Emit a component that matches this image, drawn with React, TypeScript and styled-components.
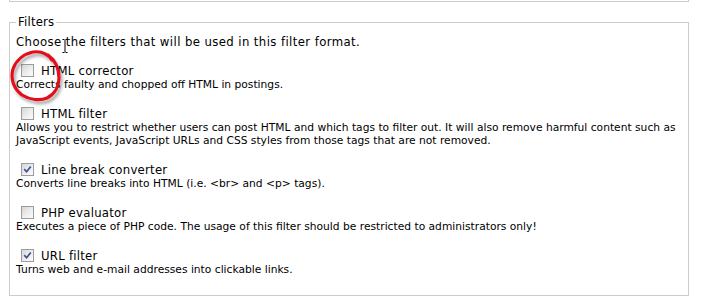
import React from 'react';
import styled, { createGlobalStyle } from 'styled-components';

const GlobalStyle = createGlobalStyle`
    html, body {
        margin: 0;
        padding: 0;
        background: #ffffff;
    }
`;

const Page = styled.div`
    position: relative;
    width: 702px;
    height: 304px;
    overflow: hidden;
    background: #ffffff;
`;

const PrevFieldset = styled.div`
    box-sizing: border-box;
    margin-left: 9px;
    width: 680px;
    height: 2px;
    border: 1px solid #cccccc;
    border-top: none;
`;

const Fieldset = styled.fieldset`
    box-sizing: border-box;
    margin: 12px 0 0 9px;
    width: 680px;
    min-width: 0;
    padding: 0 6px 19px 6px;
    border: 1px solid #cccccc;
`;

const Legend = styled.legend`
    padding: 0 2px;
    font-family: "DejaVu Sans Condensed", "DejaVu Sans", sans-serif;
    font-size: 13px;
    line-height: 16px;
    letter-spacing: 0.2px;
    color: #000000;
`;

const Intro = styled.p`
    margin: 4px 0 0 0;
    font-family: "DejaVu Sans Condensed", "DejaVu Sans", sans-serif;
    font-size: 13px;
    line-height: 16px;
    letter-spacing: 0.4px;
    color: #000000;
`;

const FilterList = styled.div`
    display: flex;
    flex-direction: column;
    gap: 15px;
    margin-top: 13px;
`;

const FilterItem = styled.div`
    display: flex;
    flex-direction: column;
`;

const FilterLabel = styled.label`
    display: flex;
    align-items: center;
    gap: 7px;
    padding-left: 5px;
    font-family: "DejaVu Sans Condensed", "DejaVu Sans", sans-serif;
    font-size: 13px;
    line-height: 15px;
    letter-spacing: 0.25px;
    color: #000000;
`;

const Box = styled.span<{ $checked?: boolean }>`
    box-sizing: border-box;
    display: inline-flex;
    align-items: center;
    justify-content: center;
    width: 13px;
    height: 13px;
    border: 1px solid #9c9c9c;
    background: linear-gradient(135deg, #d6d6d6 0%, #eeeeee 55%, #fbfbfb 100%);
    flex: none;
`;

const Description = styled.div`
    font-family: "DejaVu Sans", Verdana, sans-serif;
    font-size: 10.7px;
    line-height: 13px;
    color: #000000;
`;

const Overlay = styled.svg`
    position: absolute;
    left: 0;
    top: 0;
    pointer-events: none;
`;

const CheckMark = () => (
    <svg width="9" height="9" viewBox="0 0 9 9">
        <path d="M1.2 4.2 L3.6 6.8 L7.8 1.4" fill="none" stroke="#3f4f96" strokeWidth="1.7" />
    </svg>
);

type Filter = {
    name: string
    description: string
    checked: boolean
};

const filters: Filter[] = [
    {
        name: 'HTML corrector',
        description: 'Corrects faulty and chopped off HTML in postings.',
        checked: false,
    },
    {
        name: 'HTML filter',
        description: 'Allows you to restrict whether users can post HTML and which tags to filter out. It will also remove harmful content such as JavaScript events, JavaScript URLs and CSS styles from those tags that are not removed.',
        checked: false,
    },
    {
        name: 'Line break converter',
        description: 'Converts line breaks into HTML (i.e. <br> and <p> tags).',
        checked: true,
    },
    {
        name: 'PHP evaluator',
        description: 'Executes a piece of PHP code. The usage of this filter should be restricted to administrators only!',
        checked: false,
    },
    {
        name: 'URL filter',
        description: 'Turns web and e-mail addresses into clickable links.',
        checked: true,
    },
];

export default function App() {
    return (
        <Page>
            <GlobalStyle />
            <PrevFieldset />
            <Fieldset>
                <Legend>Filters</Legend>
                <Intro>Choose the filters that will be used in this filter format.</Intro>
                <FilterList>
                    {filters.map((f) => (
                        <FilterItem key={f.name}>
                            <FilterLabel>
                                <Box $checked={f.checked}>{f.checked ? <CheckMark /> : null}</Box>
                                {f.name}
                            </FilterLabel>
                            <Description>{f.description}</Description>
                        </FilterItem>
                    ))}
                </FilterList>
            </Fieldset>

            {/* hand-drawn red circle around the first checkbox */}
            <Overlay width="702" height="304" viewBox="0 0 702 304">
                <defs>
                    <filter id="shade" x="-20%" y="-20%" width="150%" height="150%">
                        <feDropShadow dx="2" dy="3" stdDeviation="1.6" floodColor="#000" floodOpacity="0.35" />
                    </filter>
                </defs>
                <path
                    d="M52 60 C47 53 40 51 33 52 C24 54 16 60 13 69 C10 79 14 89 22 95 C30 100 40 101 47 98 C55 94 59 86 59 78 C59 69 56 61 48 55"
                    fill="none"
                    stroke="#e3111a"
                    strokeWidth="3.2"
                    strokeLinecap="round"
                    filter="url(#shade)"
                />
                {/* text cursor */}
                <path d="M62.5 39.5 H64.5 M65.5 39.5 H67.5 M65 40 V52 M62.5 52.5 H64.5 M65.5 52.5 H67.5" stroke="#000" strokeWidth="1" fill="none" />
            </Overlay>
        </Page>
    );
}
